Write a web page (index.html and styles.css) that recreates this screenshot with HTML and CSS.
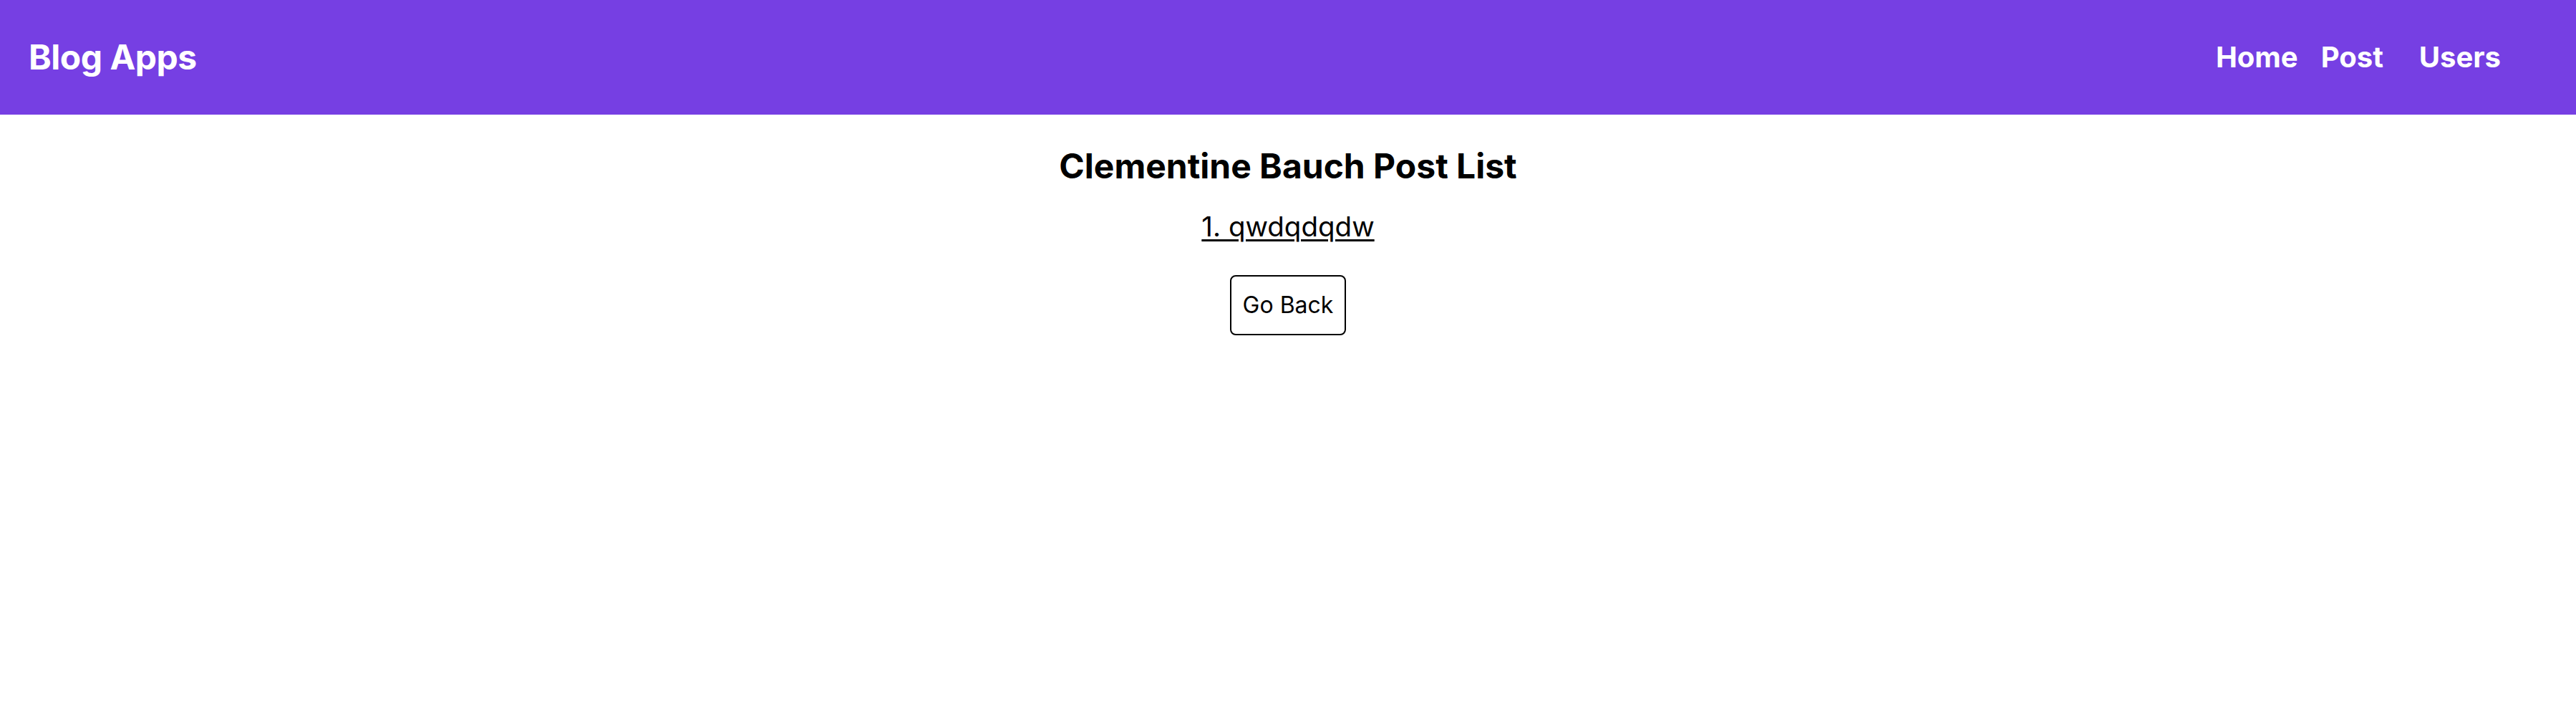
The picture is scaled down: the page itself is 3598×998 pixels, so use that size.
FILE: index.html
```html
<!DOCTYPE html>
<html lang="en">
<head>
<meta charset="utf-8">
<title>Blog Apps</title>
<link rel="stylesheet" href="styles.css">
</head>
<body>
<header class="navbar">
  <a class="brand" href="#">Blog Apps</a>
  <nav class="nav-links">
    <a class="nav-link" href="#">Home</a>
    <a class="nav-link" href="#">Post</a>
    <a class="nav-link nav-link-users" href="#">Users</a>
  </nav>
</header>
<main class="content">
  <h1 class="page-title">Clementine Bauch Post List</h1>
  <ul class="post-list">
    <li class="post-item"><a class="post-link" href="#">1. qwdqdqdw</a></li>
  </ul>
  <button class="back-button" type="button">Go Back</button>
</main>
</body>
</html>
```
FILE: styles.css
```css
* {
  box-sizing: border-box;
}

html, body {
  margin: 0;
  padding: 0;
  background: #ffffff;
  font-family: Inter, "Noto Sans", "Liberation Sans", sans-serif;
  color: #000000;
}

.navbar {
  height: 160px;
  background: #763fe3;
  display: flex;
  align-items: center;
  justify-content: space-between;
  padding: 0 105px 0 40px;
}

.brand {
  color: #ffffff;
  text-decoration: none;
  font-size: 48px;
  line-height: 64px;
  font-weight: 700;
  letter-spacing: -0.5px;
}

.nav-links {
  display: flex;
  align-items: center;
  gap: 32px;
}

.nav-link {
  color: #ffffff;
  text-decoration: none;
  font-size: 40px;
  line-height: 56px;
  font-weight: 700;
}

.nav-link-users {
  margin-left: 18px;
}

.content {
  display: flex;
  flex-direction: column;
  align-items: center;
  padding-top: 40px;
}

.page-title {
  margin: 0;
  font-size: 48px;
  line-height: 64px;
  font-weight: 700;
}

.post-list {
  list-style: none;
  margin: 24px 0 0 0;
  padding: 0;
}

.post-link {
  color: #000000;
  text-decoration: underline;
  font-size: 38.5px;
  line-height: 56px;
  text-underline-offset: 4px;
  text-decoration-thickness: 3px;
}

.back-button {
  margin-top: 40px;
  font-family: Inter, "Noto Sans", "Liberation Sans", sans-serif;
  font-size: 32px;
  line-height: 48px;
  padding: 16px;
  background: #ffffff;
  color: #000000;
  border: 2px solid #000000;
  border-radius: 8px;
}
```
